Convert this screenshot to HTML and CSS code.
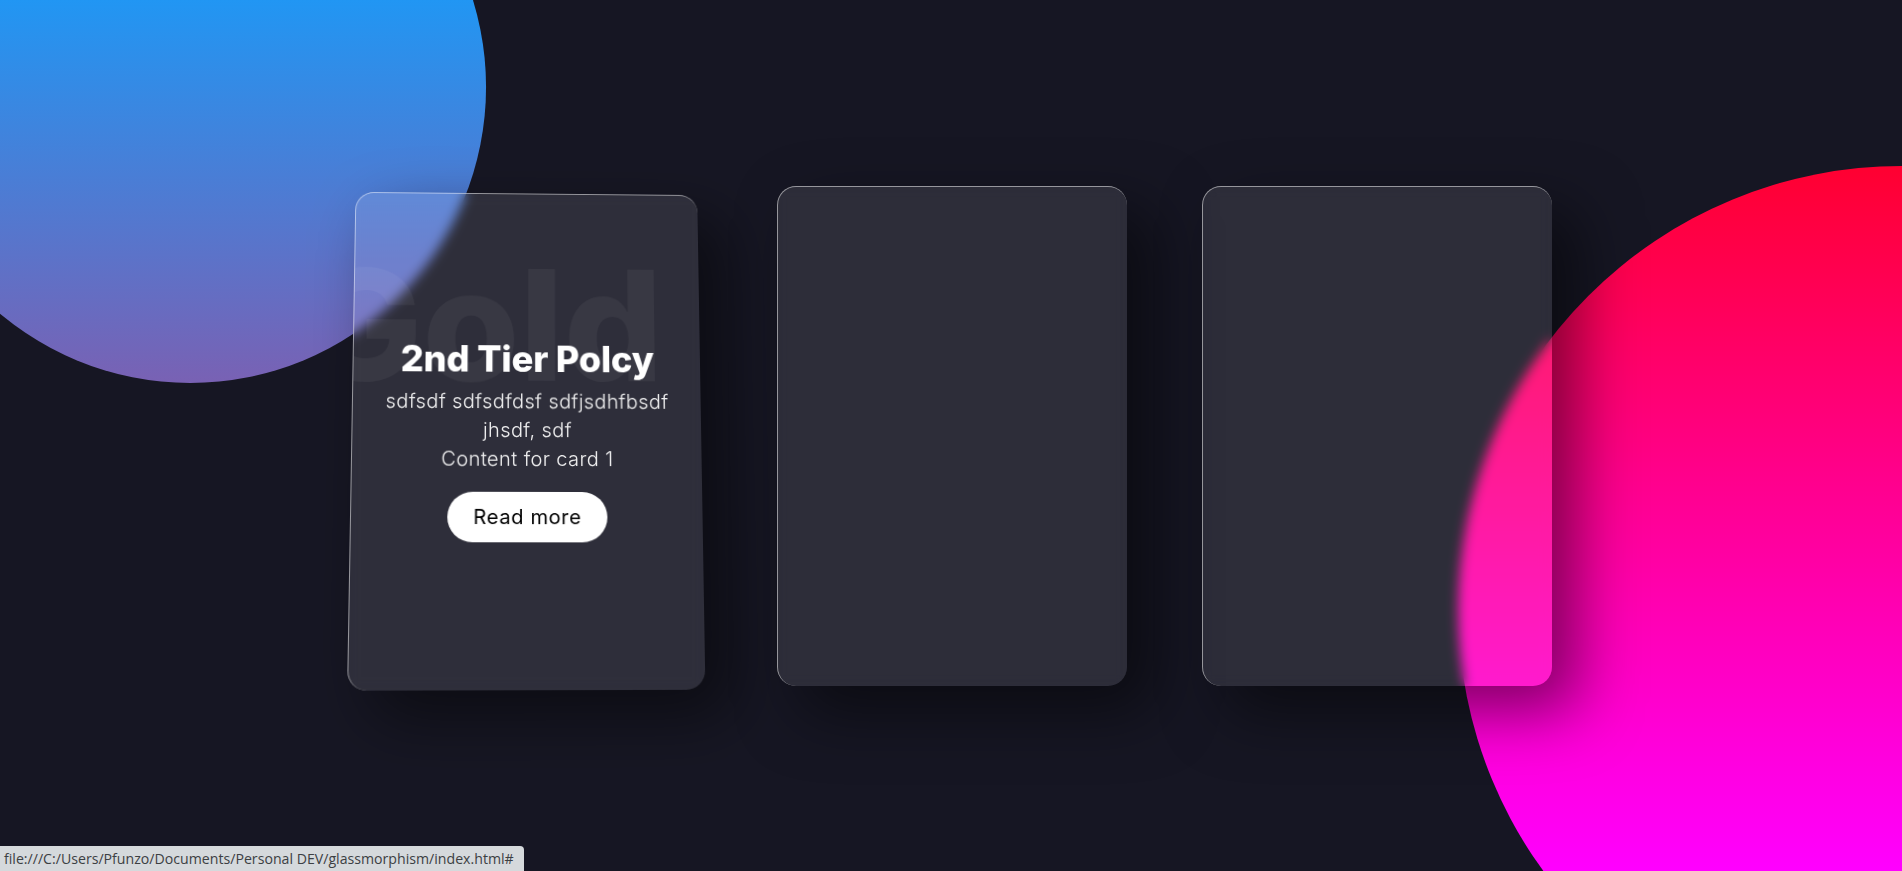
FILE: index.html
```html
<!DOCTYPE html>
<html lang="en">
<head>
    <meta charset="UTF-8">
    <meta name="viewport" content="width=device-width, initial-scale=1.0">
    <title>Glassmorphism Cards</title>
    <link rel="stylesheet" href="styles.css">
</head>
<body>

<div class="container">
    <div class="card card-tilted">
        <div class="content">
            <h2 class="bg-word">Gold</h2>
            <h3>2nd Tier Polcy</h3>
            <p class="first-line">sdfsdf sdfsdfdsf sdfjsdhfbsdf jhsdf, sdf</p>
            <p>Content for card 1</p>
            <a class="read-more" href="#">Read more</a>
        </div>
    </div>
    <div class="card"></div>
    <div class="card"></div>
</div>

<div class="status-bar">file:///C:/Users/Pfunzo/Documents/Personal DEV/glassmorphism/index.html#</div>

</body>
</html>
```

FILE: styles.css
```css
* {
    margin: 0;
    padding: 0;
    box-sizing: border-box;
}

body {
    font-family: 'Inter', sans-serif;
    background-color: #161623;
    min-height: 100vh;
    overflow: hidden;
}

/* the two gradient circles behind the glass */
body::before {
    content: '';
    position: absolute;
    top: 0;
    left: 0;
    width: 100%;
    height: 100%;
    background: linear-gradient(#f00, #f0f);
    clip-path: circle(30% at right 70%);
}

body::after {
    content: '';
    position: absolute;
    top: 0;
    left: 0;
    width: 100%;
    height: 100%;
    background: linear-gradient(#2196f3, #e91e63);
    clip-path: circle(20% at 10% 10%);
}

.container {
    position: relative;
    z-index: 1;
    display: flex;
    justify-content: center;
    align-items: center;
    height: 100vh;
    padding-left: 2px;
}

.card {
    width: 350px;
    height: 500px;
    margin: 0 37.5px;
    flex-shrink: 0;
    background: rgba(255, 255, 255, 0.1);
    border-radius: 19px;
    border-top: 1px solid rgba(255, 255, 255, 0.5);
    border-left: 1px solid rgba(255, 255, 255, 0.5);
    box-shadow: 25px 25px 62px rgba(0, 0, 0, 0.5);
    backdrop-filter: blur(6px);
    overflow: hidden;
}

.card-tilted {
    transform: perspective(1250px) rotateX(6.8deg) rotateY(1.7deg);
}

.content {
    position: relative;
    height: 100%;
    display: flex;
    flex-direction: column;
    align-items: center;
    justify-content: center;
    padding: 27px 20px 25px;
    text-align: center;
    color: #fff;
}

.bg-word {
    position: absolute;
    top: 57px;
    right: 37px;
    font-size: 158px;
    font-weight: 800;
    line-height: 1;
    color: rgba(255, 255, 255, 0.05);
}

.content h3 {
    position: relative;
    font-size: 36.5px;
    font-weight: 800;
    line-height: 48px;
    letter-spacing: -0.2px;
}

.content p {
    font-size: 20px;
    font-weight: 300;
    line-height: 29px;
    letter-spacing: 0.4px;
    color: rgba(255, 255, 255, 0.92);
}

.content .first-line {
    margin-top: 5px;
}

.read-more {
    display: inline-block;
    margin-top: 18px;
    padding: 0 26px;
    line-height: 50px;
    border-radius: 25px;
    background: #fff;
    color: #000;
    font-size: 20px;
    font-weight: 400;
    letter-spacing: 0.6px;
    text-decoration: none;
}

.status-bar {
    position: absolute;
    z-index: 2;
    left: 0;
    bottom: 0;
    height: 25px;
    padding: 0 10px 0 4px;
    background: #d5d9dc;
    border-top-right-radius: 4px;
    color: #3c4043;
    font-family: 'Open Sans', sans-serif;
    font-size: 14.15px;
    line-height: 25px;
    white-space: nowrap;
}
```
